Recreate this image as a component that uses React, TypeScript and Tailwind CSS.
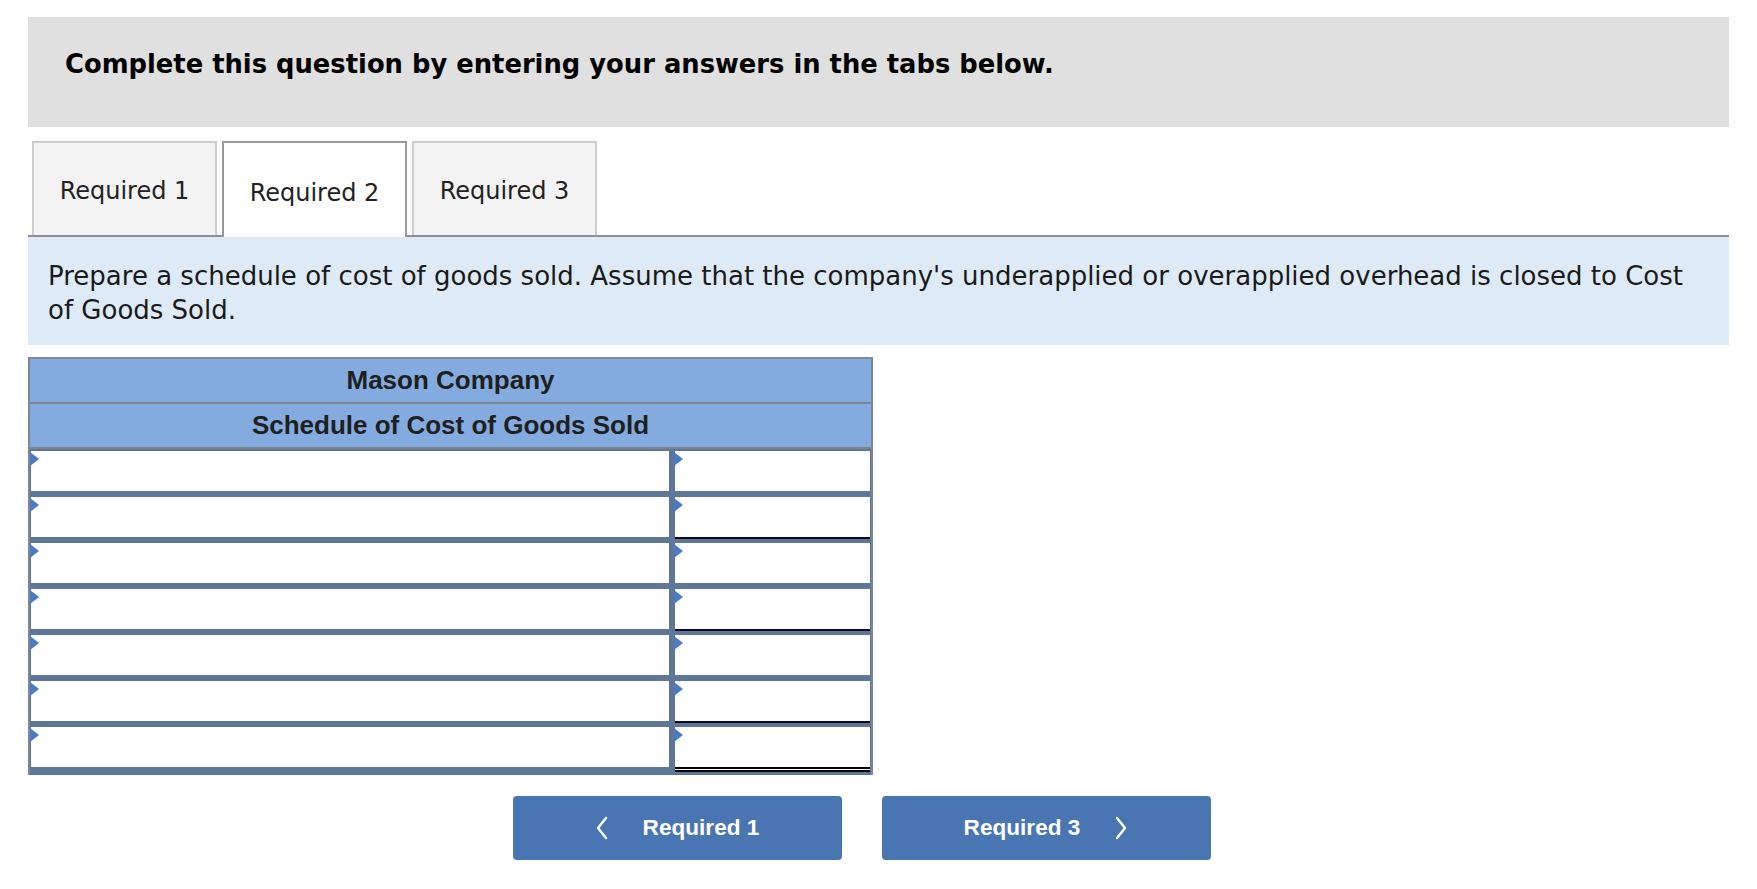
import React from 'react'

const rows = [0, 1, 2, 3, 4, 5, 6]

function Marker() {
  return (
    <span className="absolute left-[-1px] top-[1px] h-0 w-0 border-y-[7px] border-l-[9px] border-y-transparent border-l-[#4a7bc4]" />
  )
}

function Chevron({ dir }: { dir: 'left' | 'right' }) {
  return (
    <svg width="14" height="24" viewBox="0 0 14 24" fill="none" className="shrink-0">
      <path
        d={dir === 'left' ? 'M11 2 L3 12 L11 22' : 'M3 2 L11 12 L3 22'}
        stroke="#ffffff"
        strokeWidth="2.4"
        strokeLinecap="round"
        strokeLinejoin="round"
      />
    </svg>
  )
}

export default function App() {
  return (
    <div className="min-h-screen bg-white px-[28px] pt-[17px] font-['DejaVu_Sans',sans-serif]">
      <div className="bg-[#e0e0e0] pb-[48px] pl-[37px] pt-[32px] text-[25.8px] font-bold leading-[30px] text-black">
        Complete this question by entering your answers in the tabs below.
      </div>

      <div className="mt-[14px] flex gap-[5px] border-b-2 border-[#8e8e8e] pl-[4px]">
        <div className="flex h-[94px] w-[185px] items-center justify-center border-2 border-b-0 border-[#cdcdcd] bg-[#f3f3f3] pt-[3px] text-[24px] text-[#222]">
          Required 1
        </div>
        <div className="relative z-10 -mb-[2px] flex h-[96px] w-[185px] items-center justify-center border-2 border-b-0 border-[#9a9a9a] bg-white pt-[5px] text-[24px] text-[#222]">
          Required 2
        </div>
        <div className="flex h-[94px] w-[185px] items-center justify-center border-2 border-b-0 border-[#cdcdcd] bg-[#f3f3f3] pt-[3px] text-[24px] text-[#222]">
          Required 3
        </div>
      </div>

      <div className="bg-[#deebf7] pb-[18px] pl-[20px] pr-[30px] pt-[22px] text-[26px] leading-[34px] text-[#1a1a1a]">
        Prepare a schedule of cost of goods sold. Assume that the company's underapplied or overapplied overhead is closed to Cost of Goods Sold.
      </div>

      <div className="mt-[12px] w-[845px] border-2 border-b-0 border-[#7f8794] font-['Liberation_Sans',Arial,sans-serif]">
        <div className="flex h-[45px] items-center justify-center border-b-2 border-[#7c8490] bg-[#84abe0] text-[26px] font-bold text-[#1f1f1f]">
          Mason Company
        </div>
        <div className="flex h-[45px] items-center justify-center border-b-2 border-[#7c8490] bg-[#84abe0] text-[26px] font-bold text-[#1f1f1f]">
          Schedule of Cost of Goods Sold
        </div>
        <div className="grid grid-cols-[638px_195px] gap-x-[6px] gap-y-[6px] bg-[#5e7698] pb-[8px] pl-[1px] pr-0 pt-[2px]">
          {rows.map((r) => (
            <React.Fragment key={r}>
              <div className="relative h-[40px] bg-white">
                <Marker />
              </div>
              <div
                className={
                  'relative h-[40px] bg-white ' +
                  (r === 6
                    ? 'shadow-[0_2px_0_#000000,0_3px_0_#ffffff,0_5px_0_#000000]'
                    : r % 2 === 1
                      ? 'shadow-[0_2px_0_#0a0a22]'
                      : '')
                }
              >
                <Marker />
              </div>
            </React.Fragment>
          ))}
        </div>
      </div>

      <div className="mt-[21px] flex justify-center gap-[40px] pr-[34px] font-['Liberation_Sans',Arial,sans-serif]">
        <button
          type="button"
          className="flex h-[64px] w-[329px] items-center justify-center gap-[34px] rounded-[4px] bg-[#4a75b3] text-[22.6px] font-bold text-white"
        >
          <Chevron dir="left" />
          Required 1
        </button>
        <button
          type="button"
          className="flex h-[64px] w-[329px] items-center justify-center gap-[34px] rounded-[4px] bg-[#4a75b3] text-[22.6px] font-bold text-white"
        >
          Required 3
          <Chevron dir="right" />
        </button>
      </div>
    </div>
  )
}
